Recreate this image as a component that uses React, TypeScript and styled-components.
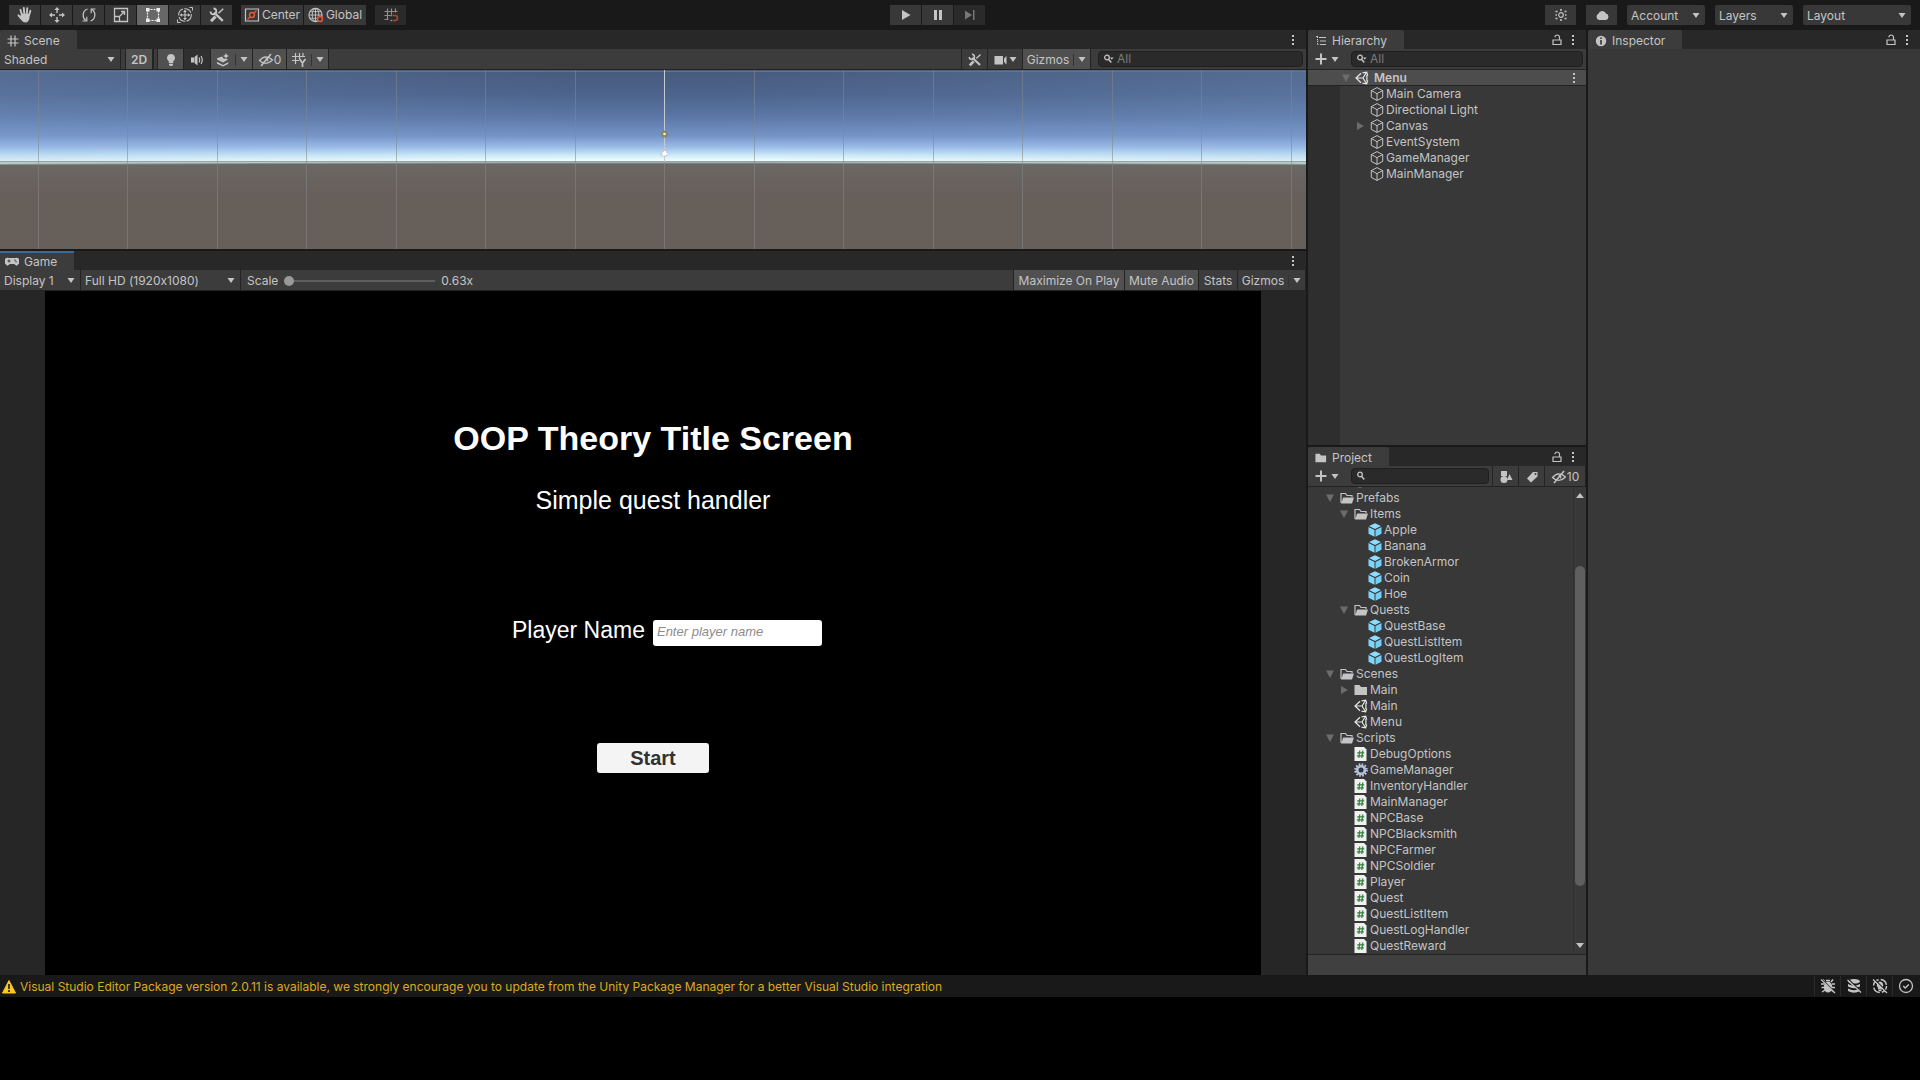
import React from "react";
import styled, { createGlobalStyle, css } from "styled-components";

const UI_FONT = 'Inter, "Liberation Sans", sans-serif';
const GAME_FONT = '"Liberation Sans", Arial, sans-serif';

const color = {
  frame: "#191919",
  tabBar: "#282828",
  panel: "#383838",
  bar: "#3c3c3c",
  active: "#505050",
  line: "#232323",
  field: "#2a2a2a",
  text: "#c4c4c4",
  dim: "#7b7b7b",
};

const GlobalStyle = createGlobalStyle`
  *, *::before, *::after { box-sizing: border-box; }
  body {
    margin: 0;
    background: #000;
    font: 12px/16px ${UI_FONT};
    font-feature-settings: "calt" 0;
    color: ${color.text};
  }
  button, input, select { font: inherit; font-feature-settings: inherit; color: inherit; margin: 0; }
  svg { display: block; flex: none; }
`;

/* ---------- icons ---------- */

type IconProps = { size?: number; children: React.ReactNode; box?: number };
const Svg = ({ size = 16, box = 16, children }: IconProps) => (
  <svg width={size} height={size} viewBox={`0 0 ${box} ${box}`} fill="none" stroke="none" aria-hidden="true">
    {children}
  </svg>
);
const C = "#c4c4c4";

const Arrow = () => (
  <svg width="8" height="5" viewBox="0 0 8 5" aria-hidden="true">
    <path d="M0.5 0h7L4 5z" fill={C} />
  </svg>
);
const HandIcon = () => (
  <Svg size={18} box={18}>
    <g stroke={C} strokeWidth="1.900" strokeLinecap="round">
      <path d="M6 9 4.400 3.800M8.300 8.500 7.800 2M10.700 8.500 11.300 2.200M12.900 9.500 14.400 4.800M5 12.500 2.500 9.300" />
    </g>
    <path d="M5 7.800h8.800l-.5 5.200Q12 16.600 9.500 16.600 7 16.600 5.200 14L4 11z" fill={C} />
  </Svg>
);
const MoveIcon = () => (
  <Svg>
    <path d="M8 2v4M8 10v4M2 8h4M10 8h4" stroke={C} strokeWidth="1.400" />
    <path d="M8 0l2.600 3H5.400zM8 16l2.600-3H5.400zM0 8l3-2.600v5.200zM16 8l-3-2.600v5.200z" fill={C} />
  </Svg>
);
const RotateIcon = () => (
  <Svg>
    <path d="M5 13.500A6.500 6.500 0 0 1 6.500 2M11 2.500A6.500 6.500 0 0 1 9.500 14" stroke={C} strokeWidth="1.300" />
    <path d="M1.500 14h4.300V9.800M14.500 2h-4.300v4.200" stroke={C} strokeWidth="1.200" />
  </Svg>
);
const ScaleIcon = () => (
  <Svg>
    <path d="M1.500 1.500h13v13h-13zM1.500 9.500h5v5" stroke={C} strokeWidth="1.300" />
    <path d="M7 9l4.500-4.500M8 4.500h3.500V8" stroke={C} strokeWidth="1.300" />
  </Svg>
);
const RectIcon = () => (
  <Svg>
    <path d="M2.500 2.500h11v11h-11z" stroke="#eee" strokeWidth="1.200" strokeDasharray="2 1" />
    <path d="M1 1h3.500v3.500H1zM11.500 1H15v3.500h-3.500zM1 11.500h3.500V15H1zM11.500 11.500H15V15h-3.500z" fill="#eee" />
  </Svg>
);
const TransformIcon = () => (
  <Svg>
    <circle cx="8" cy="8" r="6.300" stroke={C} strokeWidth="1.100" strokeDasharray="8 1.400" />
    <path d="M8 3.500v9M3.500 8h9" stroke={C} strokeWidth="1.100" />
    <path d="M8 2.800L9.800 5H6.200zM8 13.200L9.800 11H6.200zM2.800 8L5 6.200v3.600zM13.200 8L11 6.200v3.600z" fill={C} />
    <path d="M12.500.5h3v3M.5 12.500v3h3" stroke={C} />
  </Svg>
);
const ToolsIcon = ({ size = 16 }: { size?: number }) => (
  <Svg size={size}>
    <path d="M5 5.500l8.800 8.300" stroke={C} strokeWidth="2.400" />
    <path d="M4.500 1.500a2.900 2.900 0 1 1-3 3" stroke={C} strokeWidth="1.800" />
    <path d="M14.300 1.700L9.500 6.300" stroke={C} strokeWidth="1.500" />
    <path d="M6.500 9.500l-4.500 4.700" stroke={C} strokeWidth="3" />
  </Svg>
);
const CenterIcon = () => (
  <Svg>
    <path d="M1.500 2h13v12h-13z" stroke={C} strokeWidth="1.200" />
    <circle cx="8" cy="8" r="2.500" stroke="#e0593c" strokeWidth="1.500" />
    <path d="M3.500 12.500l2.700-2.700M9.800 6.200l2.700-2.700" stroke="#e0593c" strokeWidth="1.300" />
  </Svg>
);
const GlobeIcon = () => (
  <Svg>
    <circle cx="7.500" cy="8" r="6.600" stroke={C} strokeWidth="1.100" />
    <ellipse cx="7.500" cy="8" rx="3.300" ry="6.600" stroke={C} strokeWidth="1" />
    <path d="M1 8h13M2 4.700h11M2 11.300h7M7.500 1.600v12.800" stroke={C} strokeWidth="0.900" />
    <circle cx="12" cy="12" r="2.500" fill="#383838" stroke="#e0593c" strokeWidth="1.500" />
  </Svg>
);
const SnapIcon = () => (
  <Svg>
    <path d="M4.500 1.500v11M8.500 1.500v6M12.500 1.500v4M1.500 4.500h13M1.500 8.500h6M1.500 12.500h4" stroke="#8e8e8e" strokeWidth="1.200" />
    <path d="M9.500 8.500h2.500a2.500 2.500 0 0 1 0 5H9.500" stroke="#a8492f" strokeWidth="1.600" />
    <path d="M7.500 8.500h1.500M7.500 13.500h1.500" stroke="#8e8e8e" strokeWidth="1.500" />
  </Svg>
);
const PlayIcon = () => (
  <Svg>
    <path d="M4 3l8.500 5L4 13z" fill={C} />
  </Svg>
);
const PauseIcon = () => (
  <Svg>
    <path d="M4 3h3v10H4zM9 3h3v10H9z" fill={C} />
  </Svg>
);
const StepIcon = () => (
  <Svg>
    <path d="M3 3.500L10 8l-7 4.500zM11 3h1.500v10H11z" fill="#777" />
  </Svg>
);
const ServicesIcon = () => (
  <Svg>
    <circle cx="8" cy="8" r="2.300" stroke={C} strokeWidth="1.200" />
    <path d="M8 2v2M8 12v2M2.500 4.500h2M11.500 4.500h2M2.500 11.500h2M11.500 11.500h2M2.500 8H4M12 8h1.500" stroke={C} strokeWidth="1.600" />
  </Svg>
);
const CloudIcon = () => (
  <Svg>
    <path d="M5 13a3.300 3.300 0 0 1-.6-6.200A4 4 0 0 1 12 6.600a3.300 3.300 0 0 1 0 6.400z" fill={C} />
  </Svg>
);
const HashIcon = () => (
  <Svg size={12} box={12}>
    <path d="M4 .5v11M8 .5v11M.5 4h11M.5 8h11" stroke={C} strokeWidth="1.200" />
  </Svg>
);
const BulbIcon = () => (
  <Svg>
    <path d="M8 2a4 4 0 0 1 2.200 7.300V11H5.800V9.300A4 4 0 0 1 8 2zM6 11.800h4V13L8.800 14H7.200L6 13z" fill={C} />
  </Svg>
);
const AudioIcon = () => (
  <Svg>
    <path d="M2 5.500h3v5H2zM5.500 5l3-2.500v11l-3-2.500z" fill={C} />
    <path d="M10 5.500q1.500 2.500 0 5M12 4q2.500 4 0 8" stroke={C} strokeWidth="1.200" />
  </Svg>
);
const EffectsIcon = () => (
  <Svg>
    <path d="M2 6.200L7 4.500l1.500 2L12 7l1 .5-5 3-6-3zM2 9.800l6 3.200 5.500-3-.5 2L8 14.500 2 11.800z" fill={C} />
    <path d="M11 1l.9 2.100L14 4l-2.100.9L11 7l-.9-2.100L8 4l2.100-.9z" fill={C} />
  </Svg>
);
const HiddenIcon = () => (
  <Svg>
    <path d="M1.500 8.500Q7.500 1.500 14.500 8 8 14.500 1.500 8.500z" stroke={C} strokeWidth="1.300" />
    <path d="M7 5.500a3 3 0 0 1 3 4.500z" fill={C} />
    <path d="M13 2L3 14" stroke={C} strokeWidth="1.500" />
  </Svg>
);
const GridYIcon = () => (
  <Svg>
    <path d="M4.500 1v11M8.500 1v6M12 1v4M1 4.500h13M1 8.500h7" stroke={C} strokeWidth="1.200" />
    <path d="M8.500 7l3 4v4M14.500 7l-3 4" stroke={C} strokeWidth="1.700" />
  </Svg>
);
const CameraIcon = () => (
  <Svg>
    <path d="M1.500 4h8.500v8.500H1.500zM11 6.500L13.500 4v8.500L11 10z" fill={C} />
  </Svg>
);
const SearchIcon = ({ menu }: { menu?: boolean }) => (
  <Svg size={12} box={12}>
    <circle cx="4" cy="4.500" r="2.300" stroke={C} strokeWidth="1.300" />
    <path d="M5.700 6.500L8.300 9.500" stroke={C} strokeWidth="1.500" />
    {menu && <path d="M7 4.500h3.600L8.800 6.800z" fill={C} />}
  </Svg>
);
const KebabIcon = () => (
  <svg width="4" height="12" viewBox="0 0 4 12" aria-hidden="true">
    <path d="M1 1h2v2H1zM1 5h2v2H1zM1 9h2v2H1z" fill={C} />
  </svg>
);
const LockIcon = () => (
  <Svg size={12} box={12}>
    <path d="M2 6h8v4.500H2zM8.500 6V3.300a2.300 2.300 0 0 0-4.600 0" stroke={C} strokeWidth="1.200" />
  </Svg>
);
const HierarchyIcon = () => (
  <Svg size={12} box={12}>
    <path d="M1 1.500h2M4 2.500h7M5 6h6M5 9.500h6" stroke={C} strokeWidth="1.200" />
    <path d="M2.500 2v8M2.500 6H4M2.500 9.500H4" stroke={C} strokeDasharray="1 1" />
  </Svg>
);
const InfoIcon = () => (
  <Svg size={12} box={12}>
    <circle cx="6" cy="6" r="5.200" fill={C} />
    <path d="M5.200 2.500h1.600v1.500H5.200zM5.200 5h1.600v4.500H5.200z" fill="#333" />
  </Svg>
);
const GamepadIcon = () => (
  <svg width="14" height="12" viewBox="0 0 14 12" aria-hidden="true">
    <path d="M3.500 2h7A3.500 3.500 0 0 1 13 8.500Q12 10.500 10.500 9L9 8H5L3.500 9Q2 10.500 1 8.500A3.500 3.500 0 0 1 3.500 2z" fill={C} />
    <path d="M4 3.500v3M2.500 5h3M10 3.500V5M11 5v1.500" stroke="#383838" />
  </svg>
);
const PlusIcon = () => (
  <Svg size={12} box={12}>
    <path d="M6 .5v11M.5 6h11" stroke={C} strokeWidth="2" />
  </Svg>
);
const FolderIcon = ({ size = 14 }: { size?: number }) => (
  <Svg size={size} box={14}>
    <path d="M.5 2h5L7 4h6v8H.5z" fill={C} />
  </Svg>
);
const FolderOpenIcon = () => (
  <Svg size={14} box={14}>
    <path d="M1 12V2.500h4.500L7 4.500h5V6" stroke={C} strokeWidth="1.200" />
    <path d="M3.200 6.500H14L12 12.500H1z" fill={C} />
  </Svg>
);
const CubeIcon = () => (
  <Svg size={14} box={14}>
    <path d="M7 .6l5.700 3v6.800L7 13.400l-5.700-3V3.600zM1.300 3.600L7 6.600l5.700-3M7 6.600v6.800" stroke={C} />
  </Svg>
);
const PrefabIcon = () => (
  <Svg size={14} box={14}>
    <path d="M7 .2l5.900 2.800L7 5.900 1.100 3z" fill="#8fdcff" />
    <path d="M.5 3.900L6.500 6.900v6.900L.5 10.700z" fill="#7fd6fd" />
    <path d="M13.500 3.900L7.500 6.900v6.900l6-3.100z" fill="#74cef6" />
  </Svg>
);
const UnityIcon = () => (
  <Svg size={14} box={14}>
    <path
      d="M6 2.300L1 7l5 4.700M1 7h7M8 7l3.300-5.200M8 7l3.300 5.200M7.500 1.900l4.200-.7 1 3.500M7.500 12.100l4.200.7 1-3.500M11.900 4v6"
      stroke="#e6e6e6"
      strokeWidth="1.200"
    />
  </Svg>
);
const ScriptIcon = () => (
  <Svg size={14} box={14}>
    <path d="M.5 0H10l2.500 2.500V14H.5z" fill="#f0f0f0" />
    <path d="M5.800 3.500L4.800 11M8.800 3.500L7.800 11M3.200 5.800h7M2.800 8.800h7" stroke="#2f7d3b" strokeWidth="1.200" />
  </Svg>
);
const GearIcon = () => (
  <Svg size={14} box={14}>
    <circle cx="7" cy="7" r="6.900" fill="#2a3448" />
    <circle cx="7" cy="7" r="5.900" stroke="#c2c9d6" strokeWidth="1.800" strokeDasharray="1.600 1.490" />
    <circle cx="7" cy="7" r="3.900" stroke="#b9c0cd" strokeWidth="2.800" />
  </Svg>
);
const FilterIcon = () => (
  <Svg>
    <path d="M3 2h6v5H3zM9 11l2.500-6 3 6z" fill={C} />
    <circle cx="6" cy="10.500" r="3.500" fill={C} />
  </Svg>
);
const TagIcon = () => (
  <Svg>
    <path d="M9 3h4.500v4.500L7 13.500 3 9.500z" fill={C} />
    <circle cx="11.500" cy="5" r="1" fill="#3c3c3c" />
  </Svg>
);
const WarningIcon = () => (
  <Svg size={14} box={14}>
    <path d="M7 .5l6.500 12.500H.5z" fill="#ffc71f" stroke="#ffc71f" strokeLinejoin="round" />
    <path d="M7 4v5M7 10v2" stroke="#222" strokeWidth="1.700" />
  </Svg>
);
const BugOffIcon = () => (
  <Svg>
    <ellipse cx="8" cy="9" rx="4.200" ry="5.500" fill={C} />
    <path d="M5 4l-2-2.500M11 4l2-2.500M1 6h3M12 6h3M1.500 9.500h3M12 9.500h3M2 14l3-2M14 14l-3-2M6 2.500h4" stroke={C} strokeWidth="1.500" />
    <path d="M2 1.500l13 13" stroke="#191919" strokeWidth="1.500" />
    <path d="M1 1.500l14 13.500" stroke={C} strokeWidth="1.300" />
  </Svg>
);
const CacheOffIcon = () => (
  <Svg>
    <ellipse cx="8" cy="3.300" rx="6" ry="2.300" fill={C} />
    <path d="M2 6q6 3.500 12 0v2.500q-6 3.500-12 0zM2 10.500q6 3.500 12 0V13q-6 3.500-12 0z" fill={C} />
    <path d="M2.500 1.500L15.500 14" stroke="#191919" strokeWidth="1.500" />
    <path d="M1.500 2L15 14.500" stroke={C} strokeWidth="1.300" />
  </Svg>
);
const LightOffIcon = () => (
  <Svg>
    <circle cx="8" cy="8" r="6.500" stroke={C} strokeWidth="1.500" strokeDasharray="8 2.200" />
    <path d="M8 3.500a3.500 3.500 0 0 1 2 6.200V11.500H6V9.700a3.500 3.500 0 0 1 2-6.200zM6.500 12h3v1.200h-3z" fill={C} />
    <path d="M2 1l13.500 13.500" stroke="#191919" strokeWidth="1.500" />
    <path d="M1 1.500L15 15" stroke={C} strokeWidth="1.300" />
  </Svg>
);
const CheckIcon = () => (
  <Svg>
    <circle cx="8" cy="8" r="6.500" stroke={C} strokeWidth="1.300" />
    <path d="M5.200 8l2 2 3.600-3.600" stroke={C} strokeWidth="1.400" />
  </Svg>
);
const Fold = ({ open }: { open: boolean }) => (
  <Svg size={8} box={8}>
    <path d={open ? "M0 .5h8L4 8z" : "M1 0l7 4-7 4z"} fill="#6c6c6c" />
  </Svg>
);

/* ---------- frame ---------- */

const Editor = styled.div`
  display: flex;
  flex-direction: column;
  min-width: 1280px;
  background: ${color.frame};
`;

const TopBar = styled.header`
  display: grid;
  grid-template-columns: 20fr auto 21fr;
  align-items: center;
  height: 30px;
  padding: 0 9px;
`;
const BarGroup = styled.div<{ $gap?: number; $end?: boolean }>`
  display: flex;
  align-items: center;
  gap: ${(p) => p.$gap ?? 1}px;
  justify-content: ${(p) => (p.$end ? "flex-end" : "flex-start")};
`;
const TopButton = styled.button<{ $on?: boolean; $off?: boolean; $wide?: boolean }>`
  display: flex;
  align-items: center;
  justify-content: center;
  gap: 2px;
  height: 20px;
  width: ${(p) => (p.$wide ? "62px" : "31px")};
  padding: 0;
  border: 0;
  font-size: 12px;
  background: ${(p) => (p.$on ? "#676767" : p.$off ? "#2a2a2a" : color.panel)};
`;

const SelectBox = styled.span<{ $width: number; $raised?: boolean }>`
  display: grid;
  align-items: center;
  width: ${(p) => p.$width}px;
  height: 20px;
  border-radius: ${(p) => (p.$raised ? 2 : 0)}px;
  background: ${(p) => (p.$raised ? color.panel : "transparent")};
  & > * { grid-area: 1 / 1; }
  & > svg { justify-self: end; margin-right: 5px; pointer-events: none; }
`;
const Select = styled.select`
  appearance: none;
  width: 100%;
  height: 20px;
  padding: 1px 4px 0;
  border: 0;
  background: transparent;
`;
const Dropdown = ({ label, width, raised }: { label: string; width: number; raised?: boolean }) => (
  <SelectBox $width={width} $raised={raised}>
    <Select aria-label={label} defaultValue={label}>
      <option>{label}</option>
    </Select>
    <Arrow />
  </SelectBox>
);

const Workspace = styled.main`
  display: grid;
  grid-template-columns: minmax(0, 1fr) 278px 332px;
  gap: 2px;
`;
const Column = styled.div`
  display: flex;
  flex-direction: column;
  gap: 2px;
  min-width: 0;
`;
const Panel = styled.section<{ $grow?: boolean }>`
  display: flex;
  flex-direction: column;
  flex: ${(p) => (p.$grow ? "1 0 auto" : "none")};
  background: ${color.panel};
`;
const TabBar = styled.div`
  display: flex;
  align-items: center;
  height: 19px;
  padding-right: 11px;
  background: ${color.tabBar};
`;
const Tab = styled.h2<{ $focus?: boolean }>`
  display: flex;
  align-items: center;
  gap: 5px;
  height: 19px;
  margin: 0 auto 0 0;
  padding: 2px 17px 0 7px;
  font-size: 12px;
  font-weight: 400;
  background: ${color.bar};
  border-radius: 2px 2px 0 0;
  ${(p) => p.$focus && css`
    padding-left: 5px;
    border-radius: 0;
    box-shadow: inset 0 2px #3a6a94;
  `}
`;
const GhostButton = styled.button`
  display: flex;
  align-items: center;
  gap: 4px;
  padding: 0;
  border: 0;
  background: none;
`;
const TabTools = styled.div`
  display: flex;
  align-items: center;
  gap: 8px;
`;
const ToolBar = styled.div`
  display: flex;
  align-items: stretch;
  height: 21px;
  background: ${color.bar};
  border-bottom: 1px solid ${color.line};
`;
const Spacer = styled.div`
  flex: 1;
`;
const Gap = styled.div<{ $width: number }>`
  width: ${(p) => p.$width}px;
  border-left: 1px solid ${color.line};
  border-right: 1px solid ${color.line};
`;
const ToolButton = styled.button<{ $on?: boolean; $dark?: boolean; $width: number; $bold?: boolean }>`
  display: flex;
  align-items: center;
  justify-content: center;
  width: ${(p) => p.$width}px;
  padding: 1px 0 0;
  border: 0;
  border-right: 1px solid ${color.line};
  white-space: nowrap;
  font-weight: ${(p) => (p.$bold ? 600 : 400)};
  background: ${(p) => (p.$on ? color.active : p.$dark ? "#303030" : "transparent")};
`;
const Split = styled.span`
  width: 1px;
  height: 12px;
  margin: 0 4px;
  background: #333;
`;
const LeftLine = styled.div`
  width: 1px;
  background: ${color.line};
`;

const SearchField = styled.label<{ $width?: number }>`
  display: flex;
  align-items: center;
  gap: 2px;
  flex: ${(p) => (p.$width ? "none" : "1")};
  width: ${(p) => (p.$width ? `${p.$width}px` : "auto")};
  min-width: 0;
  height: 16px;
  margin: 2px 3px 2px 7px;
  padding: 0 4px;
  border-radius: 4px;
  border: 1px solid #1f1f1f;
  background: ${color.field};
`;
const SearchInput = styled.input`
  flex: 1;
  width: 0;
  min-width: 0;
  height: 14px;
  padding: 0;
  border: 0;
  outline: 0;
  background: none;
  line-height: 14px;
  &::placeholder { color: ${color.dim}; opacity: 1; }
`;

/* ---------- scene and game ---------- */

const SceneArt = styled.svg`
  width: 100%;
  height: 179px;
`;
const gridLines = [38, 127, 217, 306, 396, 485, 575, 754, 843, 933, 1022, 1112, 1201, 1291];

const SceneView = () => (
  <SceneArt viewBox="0 0 1306 179" preserveAspectRatio="none" role="img" aria-label="Scene view">
    <defs>
      <linearGradient id="sky" x1="0" y1="0" x2="0" y2="94" gradientUnits="userSpaceOnUse">
        <stop offset="0" stopColor="#475a7c" />
        <stop offset="0.250" stopColor="#4c638b" />
        <stop offset="0.500" stopColor="#5b77a6" />
        <stop offset="0.700" stopColor="#7593c6" />
        <stop offset="0.820" stopColor="#9bbce8" />
        <stop offset="0.900" stopColor="#c8e8f8" />
        <stop offset="0.960" stopColor="#effdfd" />
      </linearGradient>
      <linearGradient id="edge" x1="0" y1="0" x2="1" y2="0">
        <stop offset="0" stopColor="#86a8d8" stopOpacity="0.220" />
        <stop offset="0.450" stopColor="#86a8d8" stopOpacity="0" />
        <stop offset="0.550" stopColor="#86a8d8" stopOpacity="0" />
        <stop offset="1" stopColor="#86a8d8" stopOpacity="0.220" />
      </linearGradient>
      <linearGradient id="ground" x1="0" y1="92" x2="0" y2="125" gradientUnits="userSpaceOnUse">
        <stop offset="0" stopColor="#6c6866" />
        <stop offset="1" stopColor="#675f5a" />
      </linearGradient>
    </defs>
    <rect width="1306" height="96" fill="url(#sky)" />
    <rect width="1306" height="92" fill="url(#edge)" />
    <path d="M0 92h1306v5H0z" fill="#b4cbc8" />
    <path d="M0 91.500h1306" stroke="#93a5a2" />
    <path d="M0 94Q653 91 1306 94V179H0z" fill="#859490" />
    <path d="M0 95Q653 92 1306 95V179H0z" fill="url(#ground)" />
    <path d="M0 1.500h1306" stroke="#5f7399" />
    {gridLines.map((x) => (
      <path key={x} d={`M${x + 0.5} 0V179`} stroke="#84878a" strokeOpacity="0.550" />
    ))}
    <path d="M664.500 92V179" stroke="#8b8b86" strokeOpacity="0.550" />
    <path d="M664.500 0V92" stroke="#c4cad4" />
    <circle cx="664.500" cy="64" r="3.500" fill="#85846f" />
    <circle cx="664.500" cy="64" r="1.300" fill="#fff3b0" />
    <path d="M660.500 84.500h1.500v-2.500h1l1-1.500h2l.5 2h1.500v2.500h-1.500v1h-5z" fill="#fff" stroke="#9fb0c8" strokeWidth="0.500" />
  </SceneArt>
);

const ScaleControl = styled.label`
  display: flex;
  align-items: center;
  gap: 6px;
  padding: 1px 6px 0;
`;
const Slider = styled.input`
  appearance: none;
  width: 151px;
  height: 10px;
  background: transparent;
  &::-webkit-slider-runnable-track { height: 2px; background: #5e5e5e; }
  &::-webkit-slider-thumb {
    appearance: none;
    width: 10px;
    height: 10px;
    margin-top: -4px;
    border-radius: 50%;
    background: #999;
  }
`;

const GameStage = styled.div`
  padding: 0 45px;
  background: #262626;
`;
const GameCanvas = styled.form`
  display: flex;
  flex-direction: column;
  align-items: center;
  aspect-ratio: 16 / 9;
  padding-top: 127px;
  background: #000;
  color: #fff;
  font-family: ${GAME_FONT};
`;
const GameTitle = styled.h1`
  margin: 0;
  font-size: 34px;
  line-height: 40px;
  font-weight: 700;
`;
const GameSubtitle = styled.p`
  margin: 26px 0 0;
  font-size: 25px;
  line-height: 32px;
`;
const PlayerRow = styled.div`
  display: flex;
  align-items: flex-start;
  gap: 8px;
  margin: 104px 0 0 28px;
`;
const PlayerLabel = styled.label`
  font-size: 23px;
  line-height: 20px;
`;
const PlayerInput = styled.input`
  width: 169px;
  height: 26px;
  padding: 0 4px 3px;
  border: 0;
  border-radius: 3px;
  background: #fff;
  font-size: 13px;
  color: #323232;
  &::placeholder { color: #8c8c8c; font-style: italic; opacity: 1; }
`;
const StartButton = styled.button`
  width: 112px;
  height: 30px;
  margin-top: 97px;
  padding: 0;
  border: 0;
  border-radius: 3px;
  background: #f4f4f4;
  color: #323232;
  font-size: 20px;
  font-weight: 700;
`;

/* ---------- trees ---------- */

const HierarchyBody = styled.div`
  flex: 1;
  display: flex;
  flex-direction: column;
  background: linear-gradient(to right, #2e2e2e 32px, ${color.panel} 32px);
`;
const SceneRow = styled.div`
  display: flex;
  align-items: center;
  gap: 5px;
  height: 16px;
  padding: 0 10px 0 34px;
  background: #4d4d4d;
  border-bottom: 1px solid ${color.line};
  font-weight: 600;
`;
const Tree = styled.ul`
  flex: 1;
  min-width: 0;
  margin: 0;
  padding: 0;
  list-style: none;
`;
const TreeRow = styled.li<{ $indent: number }>`
  display: flex;
  align-items: center;
  gap: 2px;
  height: 16px;
  padding-left: ${(p) => p.$indent}px;
  white-space: nowrap;
`;
const FoldSlot = styled.span`
  display: flex;
  width: 12px;
`;
const ClippedRow = styled.li`
  display: flex;
  align-items: flex-end;
  height: 3px;
  padding: 0 0 2px 45px;
  overflow: hidden;
`;
const ProjectBody = styled.div`
  display: flex;
`;
const ScrollTrack = styled.div`
  display: flex;
  flex-direction: column;
  align-items: center;
  width: 13px;
  padding: 6px 1px 6px 0;
  border-left: 1px solid #303030;
`;
const ScrollThumb = styled.div`
  width: 10px;
  height: 320px;
  margin: 68px 0 auto;
  border-radius: 5px;
  background: #5f5f5f;
`;
const ScrollArrow = ({ up }: { up?: boolean }) => (
  <svg width="8" height="5" viewBox="0 0 8 5" aria-hidden="true">
    <path d={up ? "M0 5h8L4 0z" : "M0 0h8L4 5z"} fill={C} />
  </svg>
);
const ProjectFooter = styled.div`
  height: 21px;
  border-top: 1px solid ${color.line};
  background: #404040;
`;
const AddButton = styled(GhostButton)`
  width: 29px;
  margin-left: 7px;
`;

type Kind = "open" | "folder" | "scene" | "script" | "gear" | "prefab";
const icons: Record<Kind, React.ReactNode> = {
  open: <FolderOpenIcon />,
  folder: <FolderIcon />,
  scene: <UnityIcon />,
  script: <ScriptIcon />,
  gear: <GearIcon />,
  prefab: <PrefabIcon />,
};
const project: [string, Kind, number][] = [
  ["Prefabs", "open", 0],
  ["Items", "open", 1],
  ["Apple", "prefab", 2],
  ["Banana", "prefab", 2],
  ["BrokenArmor", "prefab", 2],
  ["Coin", "prefab", 2],
  ["Hoe", "prefab", 2],
  ["Quests", "open", 1],
  ["QuestBase", "prefab", 2],
  ["QuestListItem", "prefab", 2],
  ["QuestLogItem", "prefab", 2],
  ["Scenes", "open", 0],
  ["Main", "folder", 1],
  ["Main", "scene", 1],
  ["Menu", "scene", 1],
  ["Scripts", "open", 0],
  ["DebugOptions", "script", 1],
  ["GameManager", "gear", 1],
  ["InventoryHandler", "script", 1],
  ["MainManager", "script", 1],
  ["NPCBase", "script", 1],
  ["NPCBlacksmith", "script", 1],
  ["NPCFarmer", "script", 1],
  ["NPCSoldier", "script", 1],
  ["Player", "script", 1],
  ["Quest", "script", 1],
  ["QuestListItem", "script", 1],
  ["QuestLogHandler", "script", 1],
  ["QuestReward", "script", 1],
];
const hierarchy = ["Main Camera", "Directional Light", "Canvas", "EventSystem", "GameManager", "MainManager"];

/* ---------- status bar ---------- */

const StatusBar = styled.footer`
  display: flex;
  align-items: center;
  height: 22px;
  padding: 0 2px;
`;
const Warning = styled.p`
  display: flex;
  align-items: center;
  gap: 4px;
  margin: 0 auto 0 0;
  padding-top: 1px;
  color: #d9ab1f;
`;
const StatusButton = styled(GhostButton)`
  justify-content: center;
  width: 26px;
  height: 20px;
  border-left: 1px solid #2b2b2b;
`;

const PanelTools = ({ name, lock }: { name: string; lock?: boolean }) => (
  <TabTools>
    {lock && (
      <GhostButton aria-label={`Lock ${name}`}>
        <LockIcon />
      </GhostButton>
    )}
    <GhostButton aria-label={`${name} menu`}>
      <KebabIcon />
    </GhostButton>
  </TabTools>
);

const tools: [string, React.ReactNode][] = [
  ["Hand", <HandIcon />],
  ["Move", <MoveIcon />],
  ["Rotate", <RotateIcon />],
  ["Scale", <ScaleIcon />],
  ["Rect", <RectIcon />],
  ["Transform", <TransformIcon />],
  ["Custom tools", <ToolsIcon />],
];

export default function App() {
  return (
    <>
      <GlobalStyle />
      <Editor>
        <TopBar>
          <BarGroup $gap={9}>
            <BarGroup>
              {tools.map(([name, icon]) => (
                <TopButton key={name} aria-label={name} $on={name === "Rect"}>
                  {icon}
                </TopButton>
              ))}
            </BarGroup>
            <BarGroup>
              <TopButton $wide><CenterIcon />Center</TopButton>
              <TopButton $wide><GlobeIcon />Global</TopButton>
            </BarGroup>
            <TopButton $off aria-label="Grid snapping"><SnapIcon /></TopButton>
          </BarGroup>
          <BarGroup>
            <TopButton aria-label="Play"><PlayIcon /></TopButton>
            <TopButton aria-label="Pause"><PauseIcon /></TopButton>
            <TopButton $off aria-label="Step"><StepIcon /></TopButton>
          </BarGroup>
          <BarGroup $gap={10} $end>
            <TopButton aria-label="Services"><ServicesIcon /></TopButton>
            <TopButton aria-label="Cloud"><CloudIcon /></TopButton>
            <Dropdown label="Account" width={78} raised />
            <Dropdown label="Layers" width={78} raised />
            <Dropdown label="Layout" width={108} raised />
          </BarGroup>
        </TopBar>

        <Workspace>
          <Column>
            <Panel>
              <TabBar>
                <Tab><HashIcon />Scene</Tab>
                <PanelTools name="Scene" />
              </TabBar>
              <ToolBar>
                <Dropdown label="Shaded" width={120} />
                <Gap $width={6} />
                <ToolButton $on $bold $width={27}>2D</ToolButton>
                <Gap $width={5} />
                <ToolButton $on $width={26} aria-label="Lighting"><BulbIcon /></ToolButton>
                <ToolButton $dark $width={27} aria-label="Audio"><AudioIcon /></ToolButton>
                <ToolButton $on $width={42} aria-label="Effects"><EffectsIcon /><Split /><Arrow /></ToolButton>
                <ToolButton $on $width={34} aria-label="Hidden objects: 0"><HiddenIcon />0</ToolButton>
                <ToolButton $on $width={42} aria-label="Grid"><GridYIcon /><Split /><Arrow /></ToolButton>
                <Spacer />
                <LeftLine />
                <ToolButton $width={26} aria-label="Component tools"><ToolsIcon size={14} /></ToolButton>
                <ToolButton $width={35} aria-label="Scene camera"><CameraIcon /><Arrow /></ToolButton>
                <ToolButton $on $width={68}>Gizmos<Split /><Arrow /></ToolButton>
                <SearchField $width={205}>
                  <SearchIcon menu />
                  <SearchInput aria-label="Search scene" placeholder="All" />
                </SearchField>
              </ToolBar>
              <SceneView />
            </Panel>

            <Panel>
              <TabBar>
                <Tab $focus><GamepadIcon />Game</Tab>
                <PanelTools name="Game" />
              </TabBar>
              <ToolBar>
                <Dropdown label="Display 1" width={80} />
                <LeftLine />
                <Dropdown label="Full HD (1920x1080)" width={159} />
                <LeftLine />
                <ScaleControl>
                  Scale
                  <Slider type="range" min={0} max={100} defaultValue={0} />
                  <span>0.63x</span>
                </ScaleControl>
                <Spacer />
                <LeftLine />
                <ToolButton $on $width={111}>Maximize On Play</ToolButton>
                <ToolButton $on $width={74}>Mute Audio</ToolButton>
                <ToolButton $width={39}>Stats</ToolButton>
                <ToolButton $width={68}>Gizmos<Split /><Arrow /></ToolButton>
              </ToolBar>
              <GameStage>
                <GameCanvas onSubmit={(e) => e.preventDefault()}>
                  <GameTitle>OOP Theory Title Screen</GameTitle>
                  <GameSubtitle>Simple quest handler</GameSubtitle>
                  <PlayerRow>
                    <PlayerLabel htmlFor="player">Player Name</PlayerLabel>
                    <PlayerInput id="player" placeholder="Enter player name" />
                  </PlayerRow>
                  <StartButton type="submit">Start</StartButton>
                </GameCanvas>
              </GameStage>
            </Panel>
          </Column>

          <Column>
            <Panel $grow>
              <TabBar>
                <Tab><HierarchyIcon />Hierarchy</Tab>
                <PanelTools name="Hierarchy" lock />
              </TabBar>
              <ToolBar>
                <AddButton aria-label="Create object"><PlusIcon /><Arrow /></AddButton>
                <SearchField>
                  <SearchIcon menu />
                  <SearchInput aria-label="Search hierarchy" placeholder="All" />
                </SearchField>
              </ToolBar>
              <HierarchyBody>
                <SceneRow>
                  <Fold open />
                  <UnityIcon />
                  Menu
                  <Spacer />
                  <GhostButton aria-label="Menu scene options"><KebabIcon /></GhostButton>
                </SceneRow>
                <Tree>
                  {hierarchy.map((name) => (
                    <TreeRow key={name} $indent={48}>
                      <FoldSlot>{name === "Canvas" && <Fold open={false} />}</FoldSlot>
                      <CubeIcon />
                      {name}
                    </TreeRow>
                  ))}
                </Tree>
              </HierarchyBody>
            </Panel>

            <Panel>
              <TabBar>
                <Tab><FolderIcon size={12} />Project</Tab>
                <PanelTools name="Project" lock />
              </TabBar>
              <ToolBar>
                <AddButton aria-label="Create asset"><PlusIcon /><Arrow /></AddButton>
                <SearchField>
                  <SearchIcon />
                  <SearchInput aria-label="Search project" />
                </SearchField>
                <LeftLine />
                <ToolButton $width={26} aria-label="Search by type"><FilterIcon /></ToolButton>
                <ToolButton $width={26} aria-label="Search by label"><TagIcon /></ToolButton>
                <ToolButton $width={41} aria-label="Hidden packages: 10"><HiddenIcon />10</ToolButton>
              </ToolBar>
              <ProjectBody>
                <Tree>
                  <ClippedRow><PrefabIcon /></ClippedRow>
                  {project.map(([name, kind, depth]) => (
                    <TreeRow key={name + kind} $indent={18 + depth * 14}>
                      <FoldSlot>
                        {(kind === "open" || kind === "folder") && <Fold open={kind === "open"} />}
                      </FoldSlot>
                      {icons[kind]}
                      {name}
                    </TreeRow>
                  ))}
                </Tree>
                <ScrollTrack>
                  <ScrollArrow up />
                  <ScrollThumb />
                  <ScrollArrow />
                </ScrollTrack>
              </ProjectBody>
              <ProjectFooter />
            </Panel>
          </Column>

          <Panel>
            <TabBar>
              <Tab><InfoIcon />Inspector</Tab>
              <PanelTools name="Inspector" lock />
            </TabBar>
          </Panel>
        </Workspace>

        <StatusBar>
          <Warning>
            <WarningIcon />
            Visual Studio Editor Package version 2.0.11 is available, we strongly encourage you to update from the Unity Package Manager for a better Visual Studio integration
          </Warning>
          <StatusButton aria-label="Debugger"><BugOffIcon /></StatusButton>
          <StatusButton aria-label="Cache server"><CacheOffIcon /></StatusButton>
          <StatusButton aria-label="Auto lighting"><LightOffIcon /></StatusButton>
          <StatusButton aria-label="Progress"><CheckIcon /></StatusButton>
        </StatusBar>
      </Editor>
    </>
  );
}
